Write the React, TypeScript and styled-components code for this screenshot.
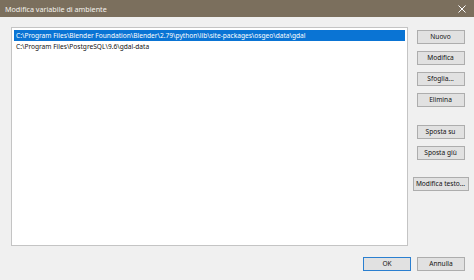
import { createGlobalStyle, styled } from "styled-components";

const paths: string[] = [
  "C:\\Program Files\\Blender Foundation\\Blender\\2.79\\python\\lib\\site-packages\\osgeo\\data\\gdal",
  "C:\\Program Files\\PostgreSQL\\9.6\\gdal-data",
];

type SideButton = { label: string; gapBefore: number; wide?: boolean };

const sideButtons: SideButton[] = [
  { label: "Nuovo", gapBefore: 0 },
  { label: "Modifica", gapBefore: 7 },
  { label: "Sfoglia...", gapBefore: 7 },
  { label: "Elimina", gapBefore: 7 },
  { label: "Sposta su", gapBefore: 18 },
  { label: "Sposta giù", gapBefore: 7 },
  { label: "Modifica testo...", gapBefore: 17, wide: true },
];

const GlobalStyle = createGlobalStyle`
  html, body {
    margin: 0;
    padding: 0;
    background: #f0f0f0;
  }
  * {
    box-sizing: border-box;
  }
`;

const App = (): JSX.Element => {
  return (
    <>
      <GlobalStyle />
      <WindowS>
        <TitleBarS>
          <span>Modifica variabile di ambiente</span>
          <CloseS>
            <svg width="8" height="8" viewBox="0 0 8 8">
              <path d="M0.5 0.5 L7.5 7.5 M7.5 0.5 L0.5 7.5" stroke="#fff" strokeWidth="1" />
            </svg>
          </CloseS>
        </TitleBarS>
        <BodyS>
          <ListBoxS>
            {paths.map((p, idx) => (
              <RowS key={p} $selected={idx === 0}>
                {p}
              </RowS>
            ))}
          </ListBoxS>
          <SideColumnS>
            {sideButtons.map((b) => (
              <WinButtonS key={b.label} $wide={b.wide} style={{ marginTop: b.gapBefore }}>
                {b.label}
              </WinButtonS>
            ))}
          </SideColumnS>
        </BodyS>
        <FooterS>
          <WinButtonS $primary>OK</WinButtonS>
          <WinButtonS>Annulla</WinButtonS>
        </FooterS>
      </WindowS>
    </>
  );
};

export default App;

/** finestra intera */
const WindowS = styled.div`
  display: flex;
  flex-direction: column;
  width: 474px;
  height: 280px;
  background: #f0f0f0;
  font-family: "Noto Sans", "Open Sans", sans-serif;
  color: #000;
  overflow: hidden;
`;

/** barra del titolo */
const TitleBarS = styled.div`
  display: flex;
  align-items: center;
  justify-content: space-between;
  height: 17px;
  padding: 0 6px 0 5px;
  background: #7b6f5d;
  color: #f4f1ec;
  font-size: 7.2px;
  flex-shrink: 0;
`;

const CloseS = styled.div`
  display: flex;
  align-items: center;
  margin-right: 2px;
`;

/** lista + pulsanti laterali */
const BodyS = styled.div`
  display: flex;
  padding: 10px 10px 0 11px;
  gap: 9px;
`;

const ListBoxS = styled.div`
  width: 397px;
  height: 219px;
  background: #fff;
  border: 1px solid #c4c4c4;
  padding: 2px;
`;

const RowS = styled.div<{ $selected?: boolean }>`
  height: 11px;
  line-height: 11px;
  padding-left: 2px;
  font-size: 6.6px;
  white-space: nowrap;
  background: ${(p) => (p.$selected ? "#0a74d4" : "transparent")};
  color: ${(p) => (p.$selected ? "#fff" : "#111")};
`;

const SideColumnS = styled.div`
  display: flex;
  flex-direction: column;
  align-items: center;
  width: 47px;
  padding-top: 3px;
`;

const WinButtonS = styled.button<{ $wide?: boolean; $primary?: boolean }>`
  width: ${(p) => (p.$wide ? "56px" : "48px")};
  height: 14px;
  padding: 0;
  background: #e1e1e1;
  border: 1px solid ${(p) => (p.$primary ? "#2a7fd0" : "#adadad")};
  font-family: inherit;
  font-size: 6.6px;
  color: #111;
  line-height: 12px;
  white-space: nowrap;
`;

/** OK / Annulla */
const FooterS = styled.div`
  display: flex;
  justify-content: flex-end;
  gap: 6px;
  padding: 11px 9px 0 0;
`;
